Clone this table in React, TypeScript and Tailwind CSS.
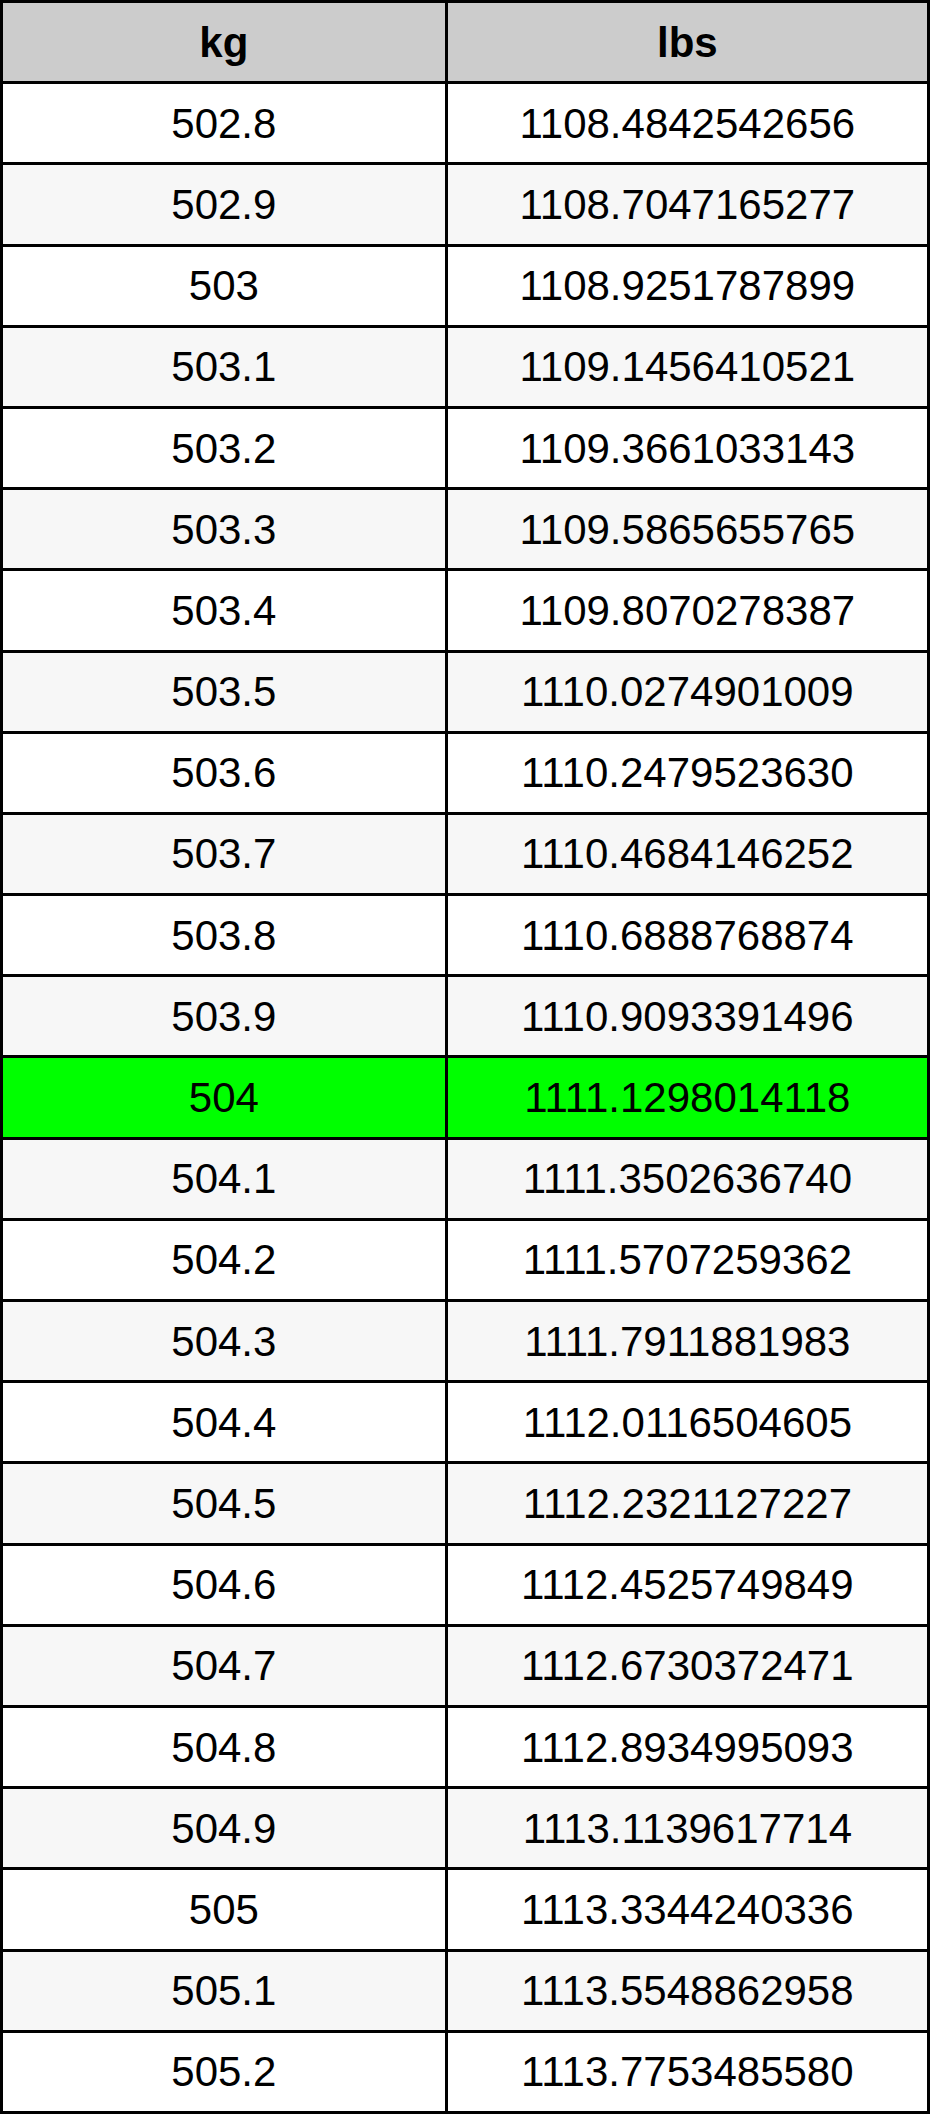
const rows: [string, string][] = [
  ["502.8", "1108.4842542656"],
  ["502.9", "1108.7047165277"],
  ["503", "1108.9251787899"],
  ["503.1", "1109.1456410521"],
  ["503.2", "1109.3661033143"],
  ["503.3", "1109.5865655765"],
  ["503.4", "1109.8070278387"],
  ["503.5", "1110.0274901009"],
  ["503.6", "1110.2479523630"],
  ["503.7", "1110.4684146252"],
  ["503.8", "1110.6888768874"],
  ["503.9", "1110.9093391496"],
  ["504", "1111.1298014118"],
  ["504.1", "1111.3502636740"],
  ["504.2", "1111.5707259362"],
  ["504.3", "1111.7911881983"],
  ["504.4", "1112.0116504605"],
  ["504.5", "1112.2321127227"],
  ["504.6", "1112.4525749849"],
  ["504.7", "1112.6730372471"],
  ["504.8", "1112.8934995093"],
  ["504.9", "1113.1139617714"],
  ["505", "1113.3344240336"],
  ["505.1", "1113.5548862958"],
  ["505.2", "1113.7753485580"],
];

export default function App() {
  return (
    <div className="w-[930px] bg-white font-['Liberation_Sans',Arial,sans-serif] text-[42px] text-black">
      <div className="border-[3px] border-black">
        {/* header */}
        <div className="flex h-[78.2px] bg-[#cccccc] font-bold">
          <div className="flex w-[444.7px] items-center justify-center border-r-[3px] border-black">
            kg
          </div>
          <div className="flex flex-1 items-center justify-center">lbs</div>
        </div>

        {rows.map(([kg, lbs], i) => {
          const bg =
            kg === "504" ? "bg-[#00ff00]" : i % 2 === 1 ? "bg-[#f7f7f7]" : "bg-white";
          return (
            <div key={kg} className={`flex h-[81.2px] border-t-[3px] border-black ${bg}`}>
              <div className="flex w-[444.7px] items-center justify-center border-r-[3px] border-black">
                {kg}
              </div>
              <div className="flex flex-1 items-center justify-center">{lbs}</div>
            </div>
          );
        })}
      </div>
    </div>
  );
}
